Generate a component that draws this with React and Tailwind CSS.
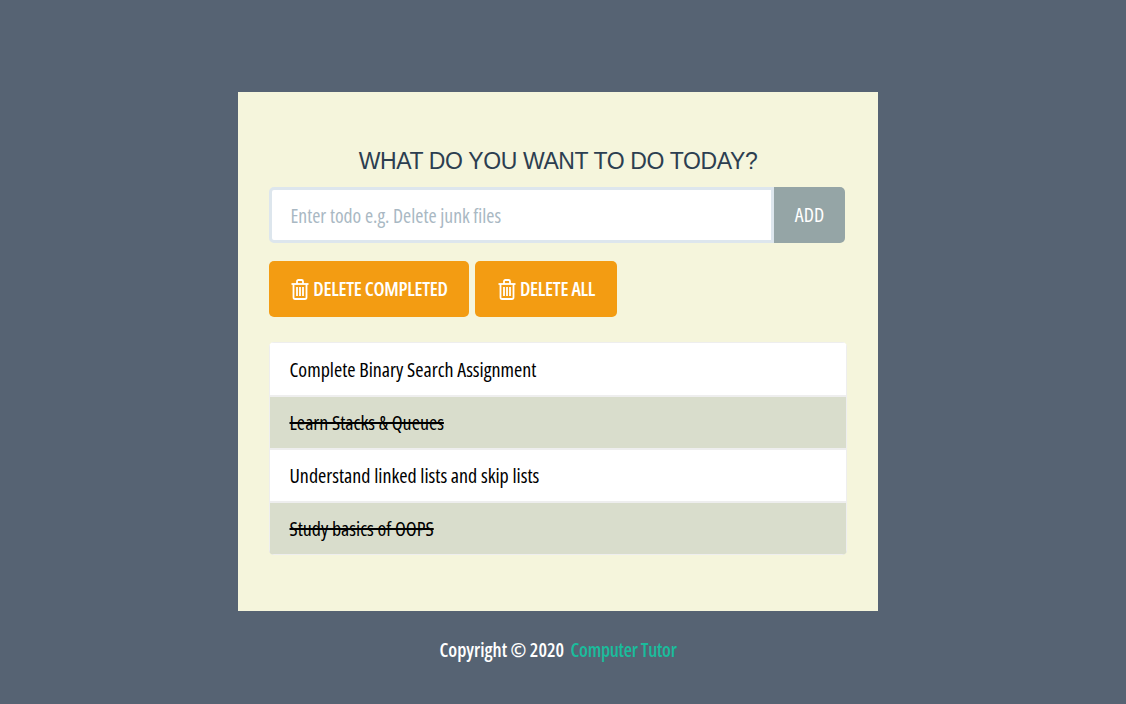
const condensed = "[font-family:'Open_Sans',sans-serif] [font-stretch:75%]"

const todos = [
  { text: "Complete Binary Search Assignment", done: false },
  { text: "Learn Stacks & Queues", done: true },
  { text: "Understand linked lists and skip lists", done: false },
  { text: "Study basics of OOPS", done: true },
]

function TrashIcon() {
  return (
    <svg viewBox="0 0 18 21" className="h-[21px] w-[18px]" fill="none" stroke="currentColor" strokeWidth="1.8">
      <path d="M0.5 5h17" />
      <path d="M6 5V2.5C6 1.7 6.6 1 7.4 1h3.2c.8 0 1.4.7 1.4 1.5V5" />
      <path d="M2.5 5v13.2c0 1.1.7 1.8 1.6 1.8h9.8c.9 0 1.6-.7 1.6-1.8V5" />
      <path d="M6 8v9M9 8v9M12 8v9" />
    </svg>
  )
}

function DeleteButton({ label, width }) {
  return (
    <button className={`flex h-14 ${width} items-center justify-center gap-[4px] rounded-[5px] bg-[#f39c12] pl-[1px] text-[19.5px] font-semibold tracking-[-0.3px] text-white`}>
      <TrashIcon />
      {label}
    </button>
  )
}

export default function App() {
  return (
    <div className={`flex min-h-[704px] flex-col items-center bg-[#566373] pt-[92px] pr-[10px] ${condensed}`}>
      <div className="flex h-[519px] w-[640px] flex-col bg-[#f5f5dc] px-[31px] pt-[55px]">
        <h1 className="text-center text-[23px] leading-[28px] tracking-[-0.37px] text-[#2c3e50] [font-family:'Liberation_Sans',sans-serif] [font-stretch:normal]">
          WHAT DO YOU WANT TO DO TODAY?
        </h1>
        <div className="mt-[12px] flex w-[576px]">
          <input
            className="h-14 flex-1 rounded-l-[5px] border-[3px] border-[#dde6ed] bg-white px-[18.5px] text-[19.7px] font-medium outline-none placeholder:text-[#a9b8c3]"
            placeholder="Enter todo e.g. Delete junk files"
          />
          <button className="h-14 w-[71px] rounded-r-[5px] bg-[#95a5a6] text-[20px] font-medium text-white">ADD</button>
        </div>
        <div className="mt-[18px] flex gap-[6px]">
          <DeleteButton label="DELETE COMPLETED" width="w-[200px]" />
          <DeleteButton label="DELETE ALL" width="w-[142px]" />
        </div>
        <ul className="mt-[25px] w-[578px] overflow-hidden rounded-[5px] text-[20px] text-black">
          {todos.map((todo) => (
            <li
              key={todo.text}
              className={`flex h-[53px] items-center border border-[#eeeeee] px-[19.5px] pt-[1px] first:h-[54px] ${todo.done ? "bg-[#d9ddcc] line-through" : "bg-white"}`}
            >
              {todo.text}
            </li>
          ))}
        </ul>
      </div>
      <p className="mt-[27px] text-[19.1px] leading-6 font-semibold text-white">
        Copyright © 2020 <span className="ml-[3px] tracking-[-0.3px] text-[#1abc9c]">Computer Tutor</span>
      </p>
    </div>
  )
}
